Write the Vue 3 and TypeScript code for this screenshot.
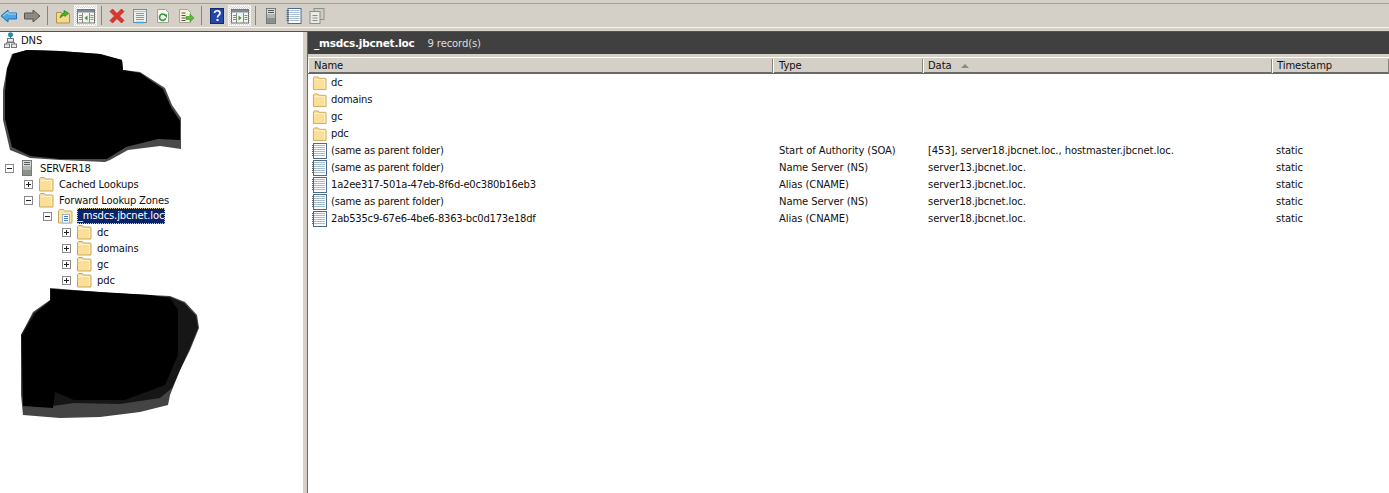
<script setup lang="ts">
interface TreeRow { label: string; depth: number; toggle: '' | '+' | '-'; icon: string; selected?: boolean }
interface Rec { name: string; icon: string; type: string; data: string; ts: string }

const tools: (string | { icon: string; pressed?: boolean })[] = [
  { icon: 'back' }, { icon: 'forward' }, 'sep',
  { icon: 'up' }, { icon: 'tree', pressed: true }, 'sep',
  { icon: 'del' }, { icon: 'props' }, { icon: 'refresh' }, { icon: 'export' }, 'sep',
  { icon: 'help' }, { icon: 'action', pressed: true }, 'sep',
  { icon: 'server' }, { icon: 'record' }, { icon: 'copy' },
]

const hidden: TreeRow[] = Array.from({ length: 7 }, () => ({ label: '', depth: 0, toggle: '', icon: '' }))
const tree: TreeRow[] = [
  { label: 'DNS', depth: 0, toggle: '', icon: 'dns' },
  ...hidden,
  { label: 'SERVER18', depth: 1, toggle: '-', icon: 'server' },
  { label: 'Cached Lookups', depth: 2, toggle: '+', icon: 'folder' },
  { label: 'Forward Lookup Zones', depth: 2, toggle: '-', icon: 'folder' },
  { label: '_msdcs.jbcnet.loc', depth: 3, toggle: '-', icon: 'zone', selected: true },
  { label: 'dc', depth: 4, toggle: '+', icon: 'folder' },
  { label: 'domains', depth: 4, toggle: '+', icon: 'folder' },
  { label: 'gc', depth: 4, toggle: '+', icon: 'folder' },
  { label: 'pdc', depth: 4, toggle: '+', icon: 'folder' },
]

const records: Rec[] = [
  { name: 'dc', icon: 'folder', type: '', data: '', ts: '' },
  { name: 'domains', icon: 'folder', type: '', data: '', ts: '' },
  { name: 'gc', icon: 'folder', type: '', data: '', ts: '' },
  { name: 'pdc', icon: 'folder', type: '', data: '', ts: '' },
  { name: '(same as parent folder)', icon: 'record', type: 'Start of Authority (SOA)', data: '[453], server18.jbcnet.loc., hostmaster.jbcnet.loc.', ts: 'static' },
  { name: '(same as parent folder)', icon: 'record', type: 'Name Server (NS)', data: 'server13.jbcnet.loc.', ts: 'static' },
  { name: '1a2ee317-501a-47eb-8f6d-e0c380b16eb3', icon: 'record', type: 'Alias (CNAME)', data: 'server13.jbcnet.loc.', ts: 'static' },
  { name: '(same as parent folder)', icon: 'record', type: 'Name Server (NS)', data: 'server18.jbcnet.loc.', ts: 'static' },
  { name: '2ab535c9-67e6-4be6-8363-bc0d173e18df', icon: 'record', type: 'Alias (CNAME)', data: 'server18.jbcnet.loc.', ts: 'static' },
]
</script>

<template>
  <div class="mmc">
    <svg class="defs" width="0" height="0" aria-hidden="true">
      <defs>
        <symbol id="back" viewBox="0 0 18 16"><path d="M1 8 8 2v3h8.500v6H8v3z" fill="#4aa8e8" stroke="#1c6fb8"/><path d="M3 8 8 4v2h8" fill="none" stroke="#a8dcf8"/></symbol>
        <symbol id="forward" viewBox="0 0 18 16"><path d="M17 8 10 2v3H1.500v6H10v3z" fill="#8c8c86" stroke="#55554f"/></symbol>
        <symbol id="folder" viewBox="0 0 16 16"><path d="M1.500 15V2.500l1-1h4l1 1.500h7l.5.500V15z" fill="#fbdf98" stroke="#c9a95c"/><path d="M2.500 4.500h11V14" fill="none" stroke="#fff3cc"/></symbol>
        <symbol id="up" viewBox="0 0 16 16"><path d="M1.500 15V4.500h5l1 1.500h7v9z" fill="#f6d88a" stroke="#b39347"/><path d="M5 10c.5-3 2-4.500 4-5V2.500L13.500 5 10 8.500V7C8 7.500 6.500 8.500 5 10z" fill="#46b52e" stroke="#247a17" stroke-width=".7"/></symbol>
        <symbol id="tree" viewBox="0 0 18 16"><rect x=".5" y="1.500" width="17" height="13.500" fill="#f3f3ef" stroke="#77776f"/><path d="M1 2h16v2.500H1z" fill="#7d8b9a"/><path d="M5.500 5v10M12.500 5v10" stroke="#8b8b84"/><path d="M2 7.500h3M2 9.500h3M2 11.500h3M13.500 7.500h3M13.500 9.500h3M13.500 11.500h3" stroke="#7a8ea8"/><path d="M10.500 7.500v5L7.500 10z" fill="#2f9e3c"/></symbol>
        <symbol id="action" viewBox="0 0 18 16"><rect x=".5" y="1.500" width="17" height="13.500" fill="#f3f3ef" stroke="#77776f"/><path d="M1 2h16v2.500H1z" fill="#7d8b9a"/><path d="M5.500 5v10M12.500 5v10" stroke="#8b8b84"/><path d="M2 7.500h3M2 9.500h3M2 11.500h3M13.500 7.500h3M13.500 9.500h3M13.500 11.500h3" stroke="#7a8ea8"/><path d="M7.500 7.500v5L10.500 10z" fill="#2f9e3c"/></symbol>
        <symbol id="del" viewBox="0 0 16 16"><path d="M1 3.500 3.500 1 8 5.500 12.500 1 15 3.500 10.500 8 15 12.500 12.500 15 8 10.500 3.500 15 1 12.500 5.500 8z" fill="#e0352b" stroke="#a91d16" stroke-width=".6"/></symbol>
        <symbol id="props" viewBox="0 0 16 16"><rect x="1.500" y="1.500" width="13" height="13" fill="#eef0ee" stroke="#7e8a90"/><path d="M1.500 3.500h13" stroke="#b8c0c4"/><path d="M4 5.500h8M4 7.500h8M4 9.500h8M4 11.500h8" stroke="#8d9aa3"/><path d="M4 14.500h8" stroke="#3fa4dc" stroke-width="1.500"/></symbol>
        <symbol id="refresh" viewBox="0 0 16 16"><path d="M2.500 1.500h8l3 3v10h-11z" fill="#f7f7f2" stroke="#a0a098"/><path d="M10.300 7.300a3.200 3.200 0 1 0 .4 3" fill="none" stroke="#2f9a3a" stroke-width="1.600"/><path d="M8.500 6.500h3.500V10z" fill="#2f9a3a"/></symbol>
        <symbol id="export" viewBox="0 0 16 16"><path d="M1.500 1.500h8l3 3v10h-11z" fill="#f5f1da" stroke="#a9a58c"/><path d="M3.500 5h4M3.500 7.500h4M3.500 10h4M3.500 12.500h4" stroke="#555"/><path d="M8 8.500h4V6l4 4-4 4v-2.500H8z" fill="#58bb3a" stroke="#2f8a20" stroke-width=".5"/></symbol>
        <symbol id="help" viewBox="0 0 14 16"><rect x=".5" y=".5" width="13" height="15" fill="#2647a8" stroke="#16296e"/><path d="M4.500 5c.3-3 5.500-3 5.500.2 0 2-2.500 2-2.500 4.300" fill="none" stroke="#fff" stroke-width="1.700"/><path d="M6.500 11h2v2h-2z" fill="#fff"/></symbol>
        <symbol id="server" viewBox="0 0 10 16"><rect x=".5" y=".5" width="9" height="15" fill="#b4b6b2" stroke="#77797a"/><path d="M1 1h8v5H1z" fill="#dcdcd8"/><path d="M2 2.500h6M2 4.500h6" stroke="#55585a"/><path d="M1 10h8v5H1z" fill="#8e908e"/><path d="M7 12.500h1.500V14H7z" fill="#42c24a"/></symbol>
        <symbol id="record" viewBox="0 0 15 16"><rect x="1.500" y=".5" width="13" height="15" fill="#fff" stroke="#4a6c8c"/><path d="M3 2.500h10M3 4.500h10M3 6.500h10M3 8.500h10M3 10.500h10M3 12.500h10" stroke="#a5bcd2"/><path d="M0 2.500h2.500M0 4.500h2.500M0 6.500h2.500M0 8.500h2.500M0 10.500h2.500M0 12.500h2.500" stroke="#5a6670"/></symbol>
        <symbol id="copy" viewBox="0 0 15 16"><rect x="4.500" y=".5" width="10" height="11" fill="#cdcdc8" stroke="#8e8e88"/><rect x=".5" y="3.500" width="10" height="12" fill="#ebebe6" stroke="#8e8e88"/><path d="M3 7.500h5M3 10h5M3 12.500h5" stroke="#8e8e88"/></symbol>
        <symbol id="dns" viewBox="0 0 13 16"><circle cx="6.500" cy="2.800" r="2.500" fill="#1f8fa8"/><path d="M6.500 5v2M2.500 12v-1.500h8V12" fill="none" stroke="#777"/><rect x="3.500" y="6.500" width="6" height="3.500" fill="#e8e8e8" stroke="#777"/><rect x=".5" y="12" width="5" height="3.500" fill="#e8e8e8" stroke="#777"/><rect x="7.500" y="12" width="5" height="3.500" fill="#e8e8e8" stroke="#777"/></symbol>
        <symbol id="zone" viewBox="0 0 16 16"><path d="M1.500 15V2.500l1-1h4l1 1.500h7l.5.500V15z" fill="#fbe5ad" stroke="#c9a95c"/><rect x="5.500" y="6.500" width="7" height="8.500" fill="#f8fafc" stroke="#9db5cc"/><path d="M7 8.500h4M7 10.500h4M7 12.500h4" stroke="#4a78b0"/></symbol>
      </defs>
    </svg>

    <div class="toolbar">
      <template v-for="(t, i) in tools" :key="i">
        <span v-if="t === 'sep'" class="sep"></span>
        <span v-else-if="typeof t !== 'string'" class="tool" :class="{ pressed: t.pressed }">
          <svg class="tool-icon" :class="t.icon"><use :href="'#' + t.icon" /></svg>
        </span>
      </template>
    </div>

    <div class="panes">
      <div class="tree">
        <div v-for="(r, i) in tree" :key="i" class="tree-row" :class="'d' + r.depth">
          <span class="toggle" :class="{ empty: !r.toggle }">
            <template v-if="r.toggle">
              <span class="h"></span><span v-if="r.toggle === '+'" class="v"></span>
            </template>
          </span>
          <svg v-if="r.icon" class="tree-icon" :class="'ti-' + r.icon"><use :href="'#' + r.icon" /></svg>
          <span class="tree-label" :class="{ selected: r.selected }">{{ r.label }}</span>
        </div>

        <svg class="scribble top" viewBox="0 0 182 116" aria-hidden="true">
          <path d="M7 19 12 5 27 1 60 2 100 5 122 11 123 21 140 23 165 39 172 56 181 69 181 100 160 97 128 101 110 111 105 113 60 111 30 109 10 101 3 71 3 41z" fill="#4a4a4a"/>
          <path d="M7 20 13 5 27 1 60 2 100 5 122 11 123 21 140 24 163 40 171 58 180 72 180 91 158 90 126 98 107 110 60 110 30 107 12 98 5 70 5 42z" fill="#000"/>
        </svg>
        <svg class="scribble bottom" viewBox="0 0 180 132" aria-hidden="true">
          <path d="M30 0 90 5 150 8 165 14 177 27 179 40 170 62 160 82 150 107 148 117 120 124 80 129 40 130 3 127 1 107 1 47 13 24 30 12z" fill="#444"/>
          <path d="M30 1 90 6 150 9 164 15 176 28 178 40 169 62 152 100 140 110 100 116 54 115 33 118 3 118 1 47 14 25 30 13z" fill="#161616"/>
          <path d="M31 1 130 7 150 10 158 22 158 67 145 97 105 112 54 112 35 104 33 120 3 118 2 48 15 26 31 12z" fill="#000"/>
        </svg>
      </div>

      <div class="splitter"></div>

      <div class="result">
        <div class="caption">
          <strong>_msdcs.jbcnet.loc</strong><span>9 record(s)</span>
        </div>
        <div class="list">
          <div class="grid head">
            <div class="hcell">Name</div>
            <div class="hcell">Type</div>
            <div class="hcell tight">Data<span class="sort"></span></div>
            <div class="hcell tight">Timestamp</div>
          </div>
          <div v-for="(r, i) in records" :key="i" class="grid rec">
            <div class="cell name">
              <svg class="rec-icon"><use :href="'#' + r.icon" /></svg>{{ r.name }}
            </div>
            <div class="cell">{{ r.type }}</div>
            <div class="cell data">{{ r.data }}</div>
            <div class="cell stamp">{{ r.ts }}</div>
          </div>
        </div>
      </div>
    </div>
  </div>
</template>

<style>
html, body { margin: 0; background: #fff; overflow: hidden; }
</style>

<style scoped>
.mmc {
  width: 1389px;
  height: 493px;
  display: flex;
  flex-direction: column;
  font-family: "DejaVu Sans", sans-serif;
  font-size: 10px;
  letter-spacing: -0.08px;
  color: #111;
  overflow: hidden;
  background: #d4d0c8;
}
.defs { position: absolute; }
.toolbar {
  height: 23px;
  margin-top: 3px;
  border-top: 1px solid #a0a09a;
  border-bottom: 1px solid #f4f3ef;
  display: flex;
  align-items: center;
  background: #d4d0c8;
  flex: none;
}
.tool {
  width: 23px;
  height: 21px;
  box-sizing: border-box;
  display: flex;
  align-items: center;
  justify-content: center;
  flex: none;
}
.tool:first-child { margin-left: -3px; }
.tool.pressed {
  background: repeating-conic-gradient(#fff 0 25%, #d4d0c8 0 50%) 0 0 / 2px 2px;
  border: 1px solid #f4f4f0;
}
.tool-icon { width: 16px; height: 16px; display: block; }
.tool-icon.back, .tool-icon.forward { width: 18px; }
.tool-icon.tree, .tool-icon.action { width: 18px; }
.tool-icon.server { width: 10px; }
.sep {
  width: 8px;
  height: 19px;
  flex: none;
  display: block;
  background: linear-gradient(#85857f, #85857f) center / 1px 100% no-repeat;
}
.panes {
  flex: 1;
  display: flex;
  margin-top: 3px;
  min-height: 0;
  border-top: 1px solid #55554f;
}
.tree {
  position: relative;
  width: 303px;
  flex: none;
  background: #fff;
}
.tree-row {
  height: 16px;
  display: flex;
  align-items: center;
  white-space: nowrap;
  letter-spacing: -0.15px;
}
.d0 { padding-left: 5px; }
.d1 { padding-left: 5px; }
.d2 { padding-left: 24px; }
.d3 { padding-left: 43px; }
.d4 { padding-left: 62px; }
.toggle {
  position: relative;
  width: 9px;
  height: 9px;
  box-sizing: border-box;
  border: 1px solid #8a8a8a;
  background: #fff;
  flex: none;
  margin-right: 5px;
}
.toggle.empty { border: 0; background: none; width: 0; margin-right: 0; }
.h { position: absolute; left: 1px; top: 3px; width: 5px; height: 1px; background: #222; }
.v { position: absolute; left: 3px; top: 1px; width: 1px; height: 5px; background: #222; }
.tree-icon { width: 16px; height: 16px; flex: none; margin-right: 4px; }
.ti-dns { width: 13px; margin-left: -1px; margin-right: 3px; }
.ti-server { width: 10px; margin-left: 3px; margin-right: 7px; }
.tree-label { padding: 0 1px; line-height: 15px; }
.tree-label.selected {
  padding-bottom: 1px;
  background: #0a246a;
  color: #fff;
  outline: 1px dotted #d8d0a0;
  outline-offset: -1px;
}
.scribble { position: absolute; display: block; }
.scribble.top { left: 0; top: 17px; width: 182px; height: 116px; }
.scribble.bottom { left: 20px; top: 256px; width: 180px; height: 132px; }
.splitter {
  width: 5px;
  flex: none;
  background: #d4d0c8;
  box-sizing: border-box;
  border-right: 1px solid #6a6a64;
}
.result { flex: 1; min-width: 0; background: #fff; display: flex; flex-direction: column; }
.caption {
  height: 25px;
  box-sizing: border-box;
  flex: none;
  background: #404040;
  color: #fff;
  display: flex;
  align-items: center;
  padding-left: 6px;
  font-size: 10.500px;
  letter-spacing: -0.23px;
  gap: 13px;
  border-bottom: 3px solid #d4d0c8;
}
.caption strong { font-weight: 700; }
.caption span { color: #ddd; font-size: 10px; letter-spacing: -0.1px; }
.list { flex: 1; }
.grid {
  display: grid;
  grid-template-columns: 465px 150px 349px 1fr;
}
.head {
  height: 17px;
  box-sizing: border-box;
  padding-top: 1px;
  background: #d4d0c8;
  border-top: 1px solid #fff;
  border-bottom: 2px solid #6a6a64;
}
.hcell {
  padding-left: 5px;
  border-left: 1px solid #fff;
  border-right: 1px solid #85857f;
  line-height: 14px;
  display: flex;
  align-items: center;
}
.hcell.tight { padding-left: 4px; }
.sort {
  width: 0;
  height: 0;
  margin-left: 9px;
  border-left: 4px solid transparent;
  border-right: 4px solid transparent;
  border-bottom: 4px solid #8a8a84;
}
.rec { height: 17px; }
.cell { padding-left: 6px; white-space: nowrap; line-height: 17px; }
.cell.data { padding-left: 5px; }
.cell.stamp { padding-left: 4px; }
.name { display: flex; padding-left: 4px; letter-spacing: -0.22px; }
.rec-icon { width: 15px; height: 16px; margin: 1px 4px 0 0; flex: none; }
</style>
